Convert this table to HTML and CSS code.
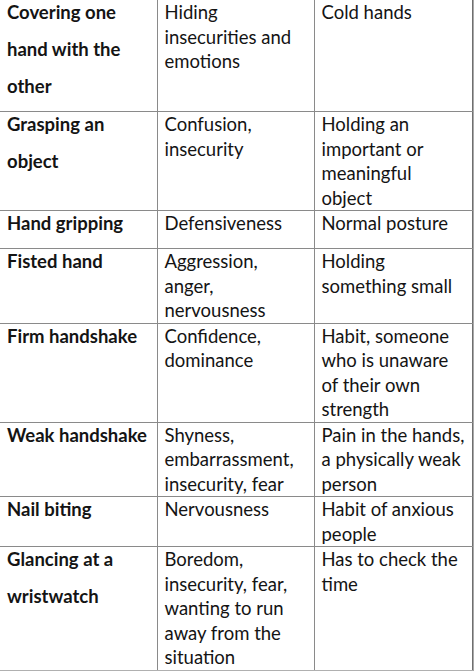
FILE: index.html
```html
<!DOCTYPE html>
<html lang="en">
<head>
<meta charset="utf-8">
<title>Hand gestures</title>
<link rel="stylesheet" href="styles.css">
</head>
<body>
<div class="sheet">
<table class="gestures">
<colgroup><col class="c1"><col class="c2"><col class="c3"></colgroup>
<tbody>
<tr>
<td><div class="term">Covering one<br>hand with the<br>other</div></td>
<td><div class="txt">Hiding<br>insecurities and<br>emotions</div></td>
<td><div class="txt">Cold hands</div></td>
</tr>
<tr>
<td><div class="term">Grasping an<br>object</div></td>
<td><div class="txt">Confusion,<br>insecurity</div></td>
<td><div class="txt">Holding an<br>important or<br>meaningful<br>object</div></td>
</tr>
<tr>
<td><div class="term">Hand gripping</div></td>
<td><div class="txt">Defensiveness</div></td>
<td><div class="txt">Normal posture</div></td>
</tr>
<tr>
<td><div class="term">Fisted hand</div></td>
<td><div class="txt">Aggression,<br>anger,<br>nervousness</div></td>
<td><div class="txt">Holding<br>something small</div></td>
</tr>
<tr>
<td><div class="term">Firm handshake</div></td>
<td><div class="txt">Confidence,<br>dominance</div></td>
<td><div class="txt">Habit, someone<br>who is unaware<br>of their own<br>strength</div></td>
</tr>
<tr>
<td><div class="term">Weak handshake</div></td>
<td><div class="txt">Shyness,<br>embarrassment,<br>insecurity, fear</div></td>
<td><div class="txt">Pain in the hands,<br>a physically weak<br>person</div></td>
</tr>
<tr>
<td><div class="term">Nail biting</div></td>
<td><div class="txt">Nervousness</div></td>
<td><div class="txt">Habit of anxious<br>people</div></td>
</tr>
<tr class="last">
<td><div class="term">Glancing at a<br>wristwatch</div></td>
<td><div class="txt">Boredom,<br>insecurity, fear,<br>wanting to run<br>away from the<br>situation</div></td>
<td><div class="txt">Has to check the<br>time</div></td>
</tr>
</tbody>
</table>
</div>
</body>
</html>
```
FILE: styles.css
```css
html, body {
  margin: 0;
  padding: 0;
  background: #ffffff;
}

.sheet {
  width: 472px;
  border-right: 2px solid #a9a9a9;
  min-height: 671px;
}

.gestures {
  border-collapse: collapse;
  table-layout: fixed;
  width: 472px;
  font-family: Lato, "Liberation Sans", sans-serif;
  font-size: 18.5px;
  color: #141414;
}

.gestures col.c1 { width: 157px; }
.gestures col.c2 { width: 157px; }
.gestures col.c3 { width: 158px; }

.gestures td {
  vertical-align: top;
  padding: 0 2px 0 7px;
  border-left: 1px solid #8a8a8a;
  border-bottom: 1px solid #8a8a8a;
  white-space: nowrap;
  overflow: hidden;
}

.gestures td:first-child {
  border-left: none;
}

.gestures td:last-child {
  border-right: 1px solid #6f6f6f;
}

.gestures tr.last td {
  border-bottom: 2px solid #b0b0b0;
}

.txt {
  line-height: 24.5px;
}

.term {
  font-weight: 700;
  line-height: 37px;
  margin-top: -6px;
  padding-bottom: 6px;
}
```
